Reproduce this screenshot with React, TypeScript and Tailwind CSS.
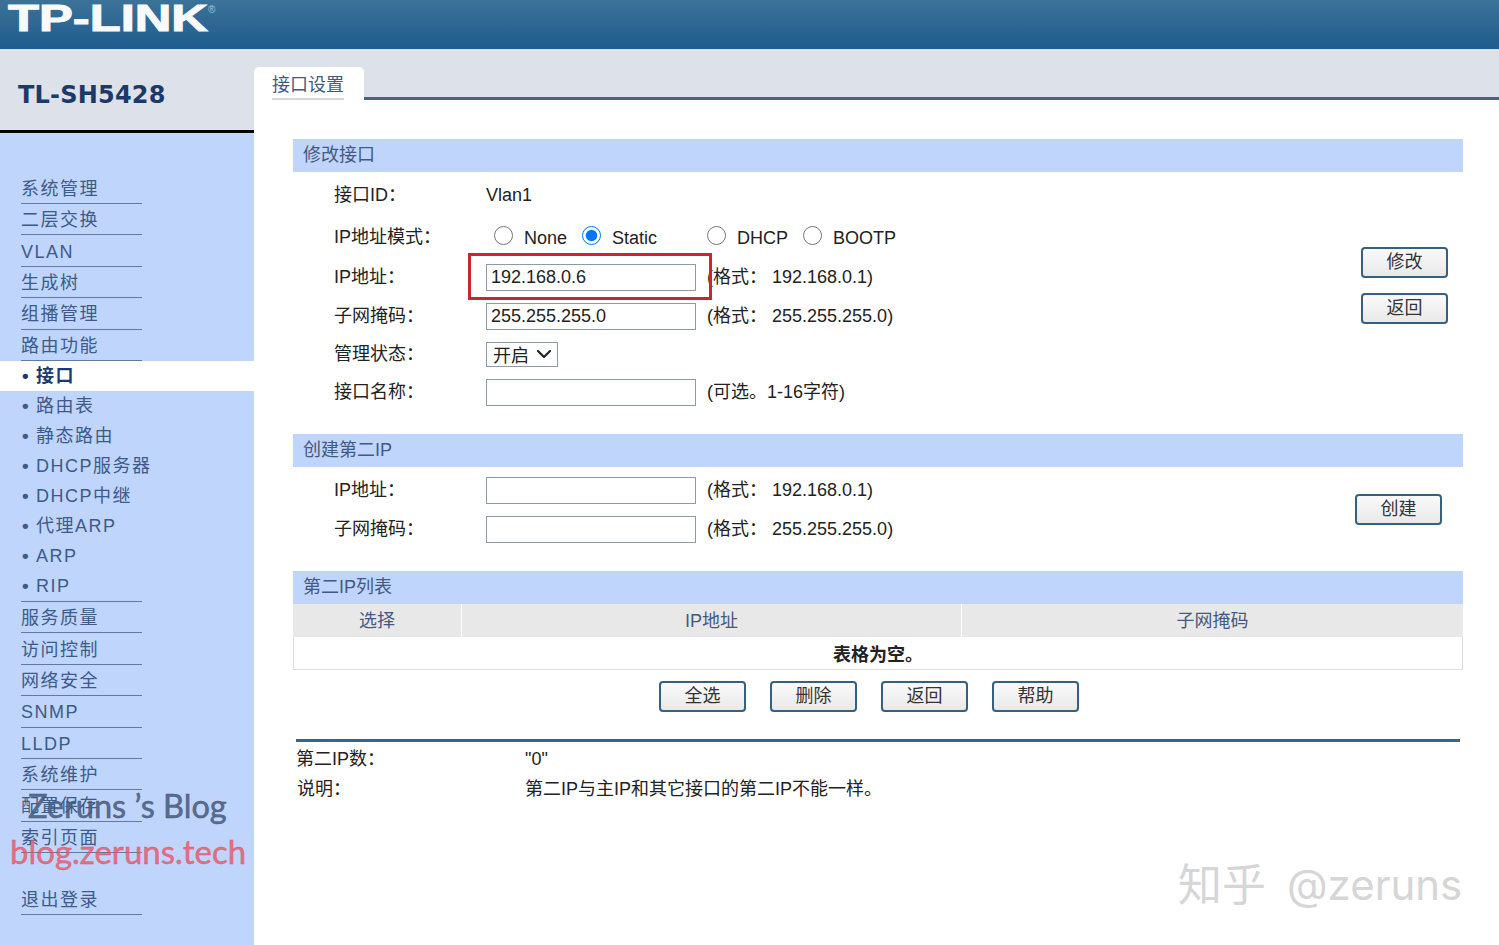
import { ReactNode } from 'react';
import { ChevronDown } from 'lucide-react';

const font = '[font-family:"Liberation_Sans","Noto_Sans_CJK_SC",sans-serif]';

const topMenu = ['系统管理', '二层交换', 'VLAN', '生成树', '组播管理', '路由功能'];
const subMenu = ['接口', '路由表', '静态路由', 'DHCP服务器', 'DHCP中继', '代理ARP', 'ARP', 'RIP'];
const bottomMenu = ['服务质量', '访问控制', '网络安全', 'SNMP', 'LLDP', '系统维护', '配置保存', '索引页面'];

const NavItem = ({ label }: { label: string }) => (
    <div className="flex h-[31.4px] w-[121px] ml-[21px] items-center border-b border-[#5f7aa3] pt-[2px] text-[#3d5a8a] tracking-[1.5px] leading-none">
        {label}
    </div>
);

const SectionTitle = ({ children }: { children: ReactNode }) => (
    <div className="flex h-[33px] items-center bg-[#bfd5fb] pl-[10px] text-[#45597f]">{children}</div>
);

const Btn = ({ children }: { children: ReactNode }) => (
    <button className="h-[31px] w-[87px] rounded-[4px] border-2 border-[#35607f] bg-gradient-to-b from-[#fafafa] to-[#e9e9e9] pb-[1px] text-[#333] leading-none">
        {children}
    </button>
);

const Row = ({ label, h, children }: { label: string; h: string; children: ReactNode }) => (
    <div className={`flex items-center ${h}`}>
        <div className="w-[152px] shrink-0 text-[#222]">{label}</div>
        {children}
    </div>
);

const TextBox = ({ value }: { value?: string }) => (
    <input
        readOnly
        defaultValue={value}
        className="h-[27px] w-[210px] border border-[#8c9ba5] bg-white px-[4px] text-[18px] text-[#222] outline-none"
    />
);

const Hint = ({ value }: { value: string }) => (
    <span className="ml-[11px] text-[#222]">
        (格式：<span className="ml-[5px]">{value}</span>)
    </span>
);

const Radio = ({ label, checked, w }: { label: string; checked?: boolean; w: string }) => (
    <label className={`flex items-center ${w}`}>
        <input type="radio" name="mode" defaultChecked={checked} className="m-0 h-[19px] w-[19px] accent-[#0075ff]" />
        <span className="ml-[11px] mt-[5px] text-[#222]">{label}</span>
    </label>
);

export default function App() {
    return (
        <div className={`relative h-[945px] w-[1499px] overflow-hidden bg-white text-[18px] ${font}`}>
            {/* Header */}
            <header className="h-[49px] bg-gradient-to-b from-[#3b7298] to-[#1e5d8f]">
                <svg width="230" height="40" viewBox="0 0 230 40" className="block">
                    <text
                        x="8"
                        y="30.5"
                        textLength="200"
                        lengthAdjust="spacingAndGlyphs"
                        fill="#f7f9fa"
                        stroke="#f7f9fa"
                        strokeWidth="1"
                        fontSize="36"
                        fontWeight="700"
                        fontFamily="Liberation Sans"
                    >
                        TP-LINK
                    </text>
                    <text x="208" y="13" fill="#a9c2d4" fontSize="10" fontFamily="Liberation Sans">
                        ®
                    </text>
                </svg>
            </header>

            <div className="flex h-[896px]">
                {/* Sidebar */}
                <aside className="flex w-[254px] shrink-0 flex-col bg-[#bfd5fb]">
                    <div className="flex h-[84px] items-center border-b-[3px] border-black bg-[#dce1ea] pl-[18px] pt-[11px] text-[24px] font-bold tracking-[0.2px] text-[#1d3a66] [font-family:'DejaVu_Sans',sans-serif]">
                        TL-SH5428
                    </div>
                    <nav className="pt-[39.6px]">
                        {topMenu.map((label) => (
                            <NavItem key={label} label={label} />
                        ))}
                        {subMenu.map((label, i) => (
                            <div
                                key={label}
                                className={`flex h-[30px] items-center pl-[21px] tracking-[1.5px] leading-none ${
                                    i === 0 ? 'bg-white font-bold text-[#1d3a6e]' : 'text-[#3d5a8a]'
                                }`}
                            >
                                <span className="w-[15px] pl-[1px] text-[19px] font-bold">•</span>
                                {label}
                            </div>
                        ))}
                        <div className="ml-[21px] w-[121px] border-b border-[#5f7aa3]" />
                        {bottomMenu.map((label) => (
                            <NavItem key={label} label={label} />
                        ))}
                        <div className="mt-[31px]">
                            <NavItem label="退出登录" />
                        </div>
                    </nav>
                </aside>

                {/* Main */}
                <main className="flex-1">
                    <div className="flex h-[51px] items-end border-b-[3px] border-[#45657b] bg-[#dce1ea]">
                        <div className="-mb-[3px] flex h-[33px] w-[110px] justify-center rounded-t-[5px] bg-white pr-[2px] pt-[6px] text-[#3f5a85]">
                            <span className="h-[27px] border-b-2 border-[#d3d8dc] leading-[24px]">接口设置</span>
                        </div>
                    </div>

                    <div className="ml-[39px] mr-[36px] pt-[39px]">
                        {/* 修改接口 */}
                        <SectionTitle>修改接口</SectionTitle>
                        <div className="flex h-[262px] justify-between">
                            <div className="pl-[41px] pt-[3px]">
                                <Row label="接口ID：" h="h-[41px]">
                                    <span className="text-[#222]">Vlan1</span>
                                </Row>
                                <Row label="IP地址模式：" h="h-[42px]">
                                    <div className="-mt-[3px] flex pl-[8px]">
                                        <Radio label="None" w="w-[88px]" />
                                        <Radio label="Static" checked w="w-[125px]" />
                                        <Radio label="DHCP" w="w-[96px]" />
                                        <Radio label="BOOTP" w="w-[110px]" />
                                    </div>
                                </Row>
                                <Row label="IP地址：" h="h-[39px]">
                                    <div className="relative flex">
                                        <TextBox value="192.168.0.6" />
                                        <div className="absolute -left-[18px] -top-[11px] h-[47px] w-[244px] border-[3px] border-[#c9262f]" />
                                    </div>
                                    <Hint value="192.168.0.1" />
                                </Row>
                                <Row label="子网掩码：" h="h-[38px]">
                                    <TextBox value="255.255.255.0" />
                                    <Hint value="255.255.255.0" />
                                </Row>
                                <Row label="管理状态：" h="h-[38px]">
                                    <div className="relative">
                                        <select className="block h-[25px] w-[72px] appearance-none border border-[#8c9ba5] bg-white pl-[6px] text-[18px] text-[#222] outline-none">
                                            <option>开启</option>
                                        </select>
                                        <ChevronDown
                                            size={24}
                                            strokeWidth={2.2}
                                            className="pointer-events-none absolute right-[2.5px] top-[0.5px] text-[#222]"
                                        />
                                    </div>
                                </Row>
                                <Row label="接口名称：" h="h-[38px]">
                                    <TextBox />
                                    <span className="ml-[11px] text-[#222]">(可选。1-16字符)</span>
                                </Row>
                            </div>
                            <div className="flex flex-col gap-[15px] pr-[15px] pt-[75px]">
                                <Btn>修改</Btn>
                                <Btn>返回</Btn>
                            </div>
                        </div>

                        {/* 创建第二IP */}
                        <SectionTitle>创建第二IP</SectionTitle>
                        <div className="flex h-[104px] justify-between">
                            <div className="pl-[41px] pt-[3.5px]">
                                <Row label="IP地址：" h="h-[39px]">
                                    <TextBox />
                                    <Hint value="192.168.0.1" />
                                </Row>
                                <Row label="子网掩码：" h="h-[39px]">
                                    <TextBox />
                                    <Hint value="255.255.255.0" />
                                </Row>
                            </div>
                            <div className="pr-[21px] pt-[27px]">
                                <Btn>创建</Btn>
                            </div>
                        </div>

                        {/* 第二IP列表 */}
                        <SectionTitle>第二IP列表</SectionTitle>
                        <div className="flex h-[33px] bg-[#e8e8e8] pt-[1px] text-[#45597f]">
                            <div className="flex w-[168px] items-center justify-center">选择</div>
                            <div className="-mt-[1px] flex w-[500px] items-center justify-center border-l border-white pt-[1px]">IP地址</div>
                            <div className="-mt-[1px] flex flex-1 items-center justify-center border-l border-white pt-[1px]">子网掩码</div>
                        </div>
                        <div className="flex h-[33px] items-center justify-center border-x border-b border-[#dddddd] pt-[4px] font-bold text-[#222]">
                            表格为空。
                        </div>
                        <div className="flex justify-center gap-[24px] pr-[18px] pt-[11px]">
                            <Btn>全选</Btn>
                            <Btn>删除</Btn>
                            <Btn>返回</Btn>
                            <Btn>帮助</Btn>
                        </div>

                        <div className="mx-[3px] mt-[27px] border-t-[3px] border-[#36678a]" />
                        <div className="flex h-[30px] items-center pl-[3px] pt-[4px] text-[#222]">
                            <span className="w-[229px]">第二IP数：</span>
                            <span>"0"</span>
                        </div>
                        <div className="flex h-[30px] items-center pl-[4px] pt-[4px] text-[#222]">
                            <span className="w-[228px]">说明：</span>
                            <span>第二IP与主IP和其它接口的第二IP不能一样。</span>
                        </div>
                    </div>
                </main>
            </div>

            {/* Watermarks */}
            <div className="pointer-events-none absolute left-[28px] top-[784px] text-[32.5px] leading-[44px] text-[#46597a]/85 [-webkit-text-stroke:0.5px_#46597a] [font-family:'Lato',sans-serif]">
                Zeruns ’s Blog
            </div>
            <div className="pointer-events-none absolute left-[10px] top-[829px] text-[33px] leading-[44px] text-[#e65064]/75 [-webkit-text-stroke:0.4px_#e65064] [font-family:'Lato',sans-serif]">
                blog.zeruns.tech
            </div>
            <div className="pointer-events-none absolute left-[1178px] top-[854px] flex items-center leading-[62px] text-[#d6d6d6] [font-family:'Inter','Noto_Sans_CJK_SC',sans-serif]">
                <span className="text-[44px]">知乎</span>
                <span className="ml-[21px] text-[42px]">@zeruns</span>
            </div>
        </div>
    );
}
